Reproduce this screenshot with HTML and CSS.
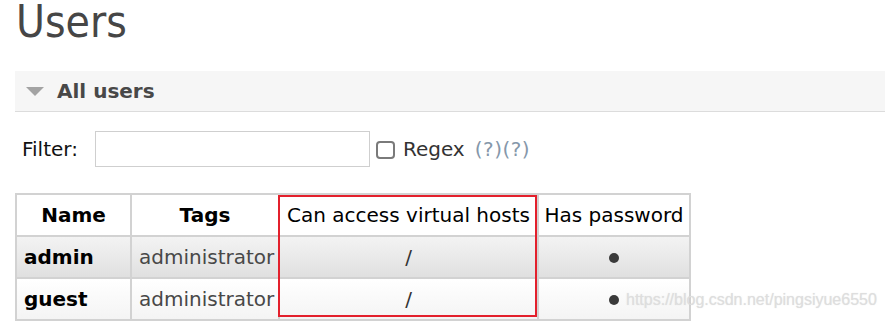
FILE: index.html
```html
<!DOCTYPE html>
<html>
<head>
<meta charset="utf-8">
<link rel="stylesheet" href="styles.css">
</head>
<body>
<div class="page">
  <h1 class="title">Users</h1>
  <div class="section-head">
    <span class="tri"></span>
    <h2 class="section-title">All users</h2>
  </div>
  <div class="filter-row">
    <label class="filter-label">Filter:</label>
    <input class="filter-input" type="text">
    <span class="checkbox"></span>
    <span class="regex">Regex</span>
    <span class="help">(?)(?)</span>
  </div>
  <div class="table-wrap">
    <table class="list">
      <colgroup>
        <col class="c-name"><col class="c-tags"><col class="c-vh"><col class="c-pw">
      </colgroup>
      <thead>
        <tr>
          <th class="bold">Name</th>
          <th class="bold">Tags</th>
          <th>Can access virtual hosts</th>
          <th>Has password</th>
        </tr>
      </thead>
      <tbody>
        <tr class="alt1">
          <td class="name">admin</td>
          <td class="tags">administrator</td>
          <td class="center">/</td>
          <td class="center"><span class="dot"></span></td>
        </tr>
        <tr class="alt2">
          <td class="name">guest</td>
          <td class="tags">administrator</td>
          <td class="center">/</td>
          <td class="center"><span class="dot"></span></td>
        </tr>
      </tbody>
    </table>
    <div class="highlight"></div>
  </div>
  <div class="watermark">https://blog.csdn.net/pingsiyue6550</div>
</div>
</body>
</html>
```
FILE: styles.css
```css
html, body {
  margin: 0;
  padding: 0;
  background: #fff;
}
body {
  font-family: "DejaVu Sans", Verdana, sans-serif;
  color: #484848;
  width: 885px;
  height: 322px;
  overflow: hidden;
}
.page {
  position: relative;
  padding-left: 15px;
}
.title {
  margin: 0;
  font-family: "DejaVu Sans Condensed", "DejaVu Sans", sans-serif;
  font-stretch: condensed;
  font-weight: normal;
  font-size: 44px;
  line-height: 44px;
  color: #464646;
  padding-left: 1px;
}
.section-head {
  margin-top: 27px;
  height: 40px;
  background: #f6f6f6;
  border-bottom: 1px solid #dcdcdc;
  display: flex;
  align-items: center;
}
.tri {
  width: 0;
  height: 0;
  margin-left: 11px;
  margin-top: 1px;
  border-left: 9px solid transparent;
  border-right: 9px solid transparent;
  border-top: 9px solid #a3a3a3;
}
.section-title {
  margin: 0 0 0 13px;
  font-size: 20px;
  font-weight: bold;
  color: #484848;
  line-height: 40px;
}
.filter-row {
  margin-top: 19px;
  display: flex;
  align-items: center;
  height: 36px;
  padding-left: 7px;
}
.filter-label {
  font-size: 20px;
  color: #111;
  line-height: 24px;
}
.filter-input {
  margin: 0 0 0 17px;
  width: 275px;
  height: 36px;
  box-sizing: border-box;
  border: 1px solid #cfcfcf;
  padding: 0;
  background: #fff;
}
.checkbox {
  width: 19px;
  height: 18px;
  margin-left: 6px;
  margin-top: 1px;
  border: 2px solid #7a7a7a;
  border-radius: 4px;
  box-sizing: border-box;
  background: #fff;
}
.regex {
  margin-left: 8px;
  font-size: 20px;
  line-height: 24px;
  color: #333;
}
.help {
  margin-left: 10px;
  font-size: 20px;
  line-height: 24px;
  color: #8597aa;
  letter-spacing: 0.5px;
}
.table-wrap {
  position: relative;
  margin-top: 26px;
  width: 674px;
}
.list {
  border-collapse: collapse;
  table-layout: fixed;
  width: 674px;
  border: 2px solid #d2d2d2;
  font-size: 20px;
}
.c-name { width: 115px; }
.c-tags { width: 148px; }
.c-vh { width: 259px; }
.c-pw { width: 152px; }
.list th, .list td {
  border: 2px solid #d2d2d2;
  height: 40px;
  padding: 0 7px;
  line-height: 24px;
  white-space: nowrap;
  overflow: hidden;
}
.list th {
  font-weight: normal;
  color: #000;
  background: #fff;
  padding: 0 4px;
}
.list th.bold {
  font-weight: bold;
}
.alt1 td {
  background: linear-gradient(#f3f3f3, #e0e0e0);
}
.alt2 td {
  background: linear-gradient(#ffffff, #f4f4f4);
}
.name {
  font-weight: bold;
  color: #000;
}
.tags {
  color: #484848;
  padding-left: 7px !important;
}
.center {
  text-align: center;
  color: #333;
}
.dot {
  display: inline-block;
  width: 10px;
  height: 10px;
  border-radius: 50%;
  background: #3a3a3a;
  vertical-align: middle;
  margin-top: -1px;
}
.highlight {
  position: absolute;
  left: 263px;
  top: 2px;
  width: 259px;
  height: 122px;
  box-sizing: border-box;
  border: 2px solid #e3202c;
  pointer-events: none;
}
.watermark {
  position: absolute;
  left: 626px;
  top: 291px;
  font-family: "Liberation Sans", Arial, sans-serif;
  font-size: 16px;
  line-height: 18px;
  color: #dedede;
  text-shadow: 0 0 1px rgba(200,200,200,0.5);
  white-space: nowrap;
}
```
